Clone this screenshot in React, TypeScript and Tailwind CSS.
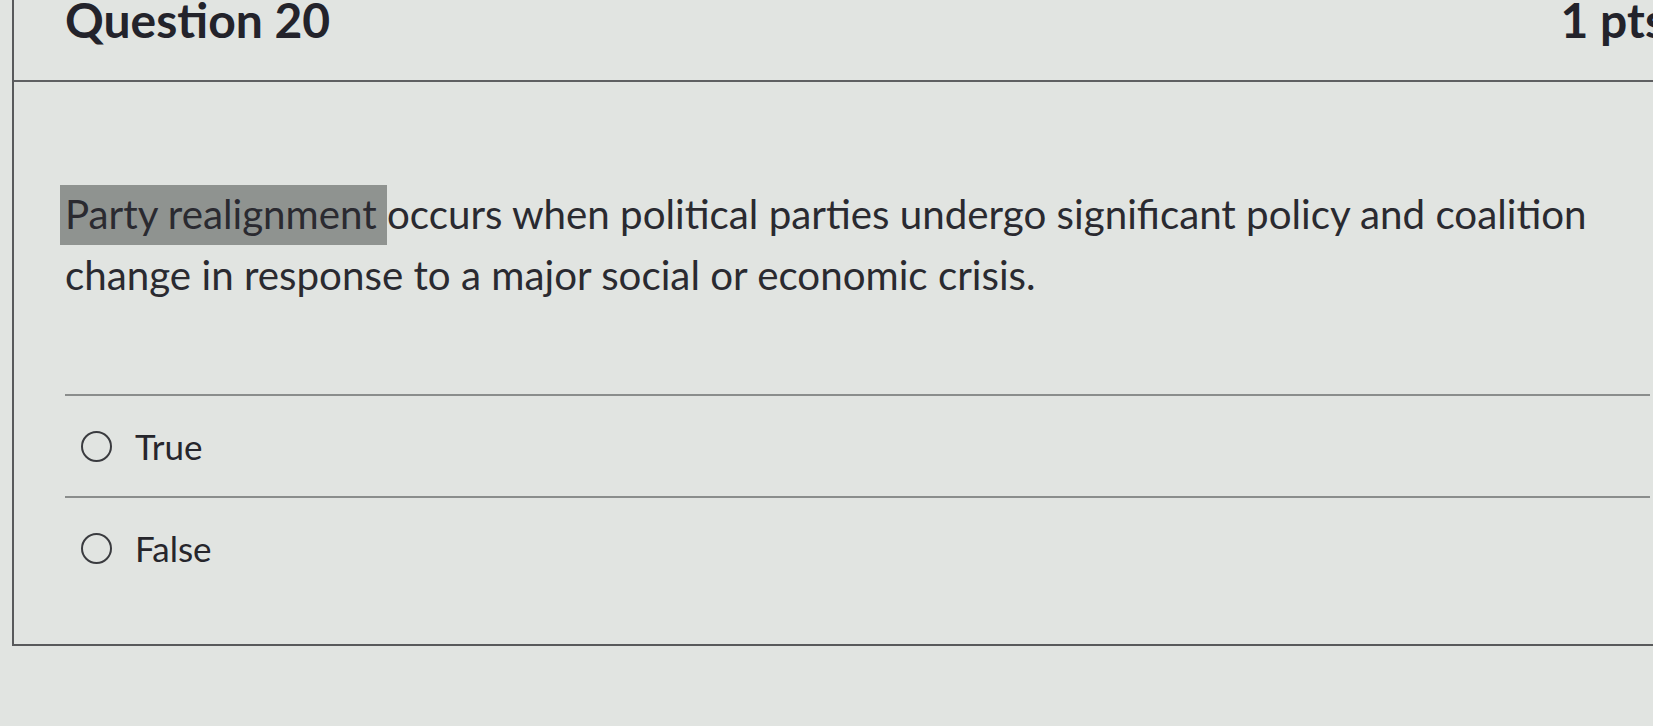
import React from "react";

const options = ["True", "False"];

const Radio: React.FC<{ label: string }> = ({ label }) => (
  <div className="flex h-[100px] items-center">
    <span className="ml-[16px] h-[31px] w-[31px] shrink-0 rounded-full border-[2.5px] border-[#3a3b3f]" />
    <span className="ml-[23px] text-[35px] text-[#26262c]">{label}</span>
  </div>
);

export default function App() {
  return (
    <div
      className="h-[726px] w-full overflow-hidden bg-[#e1e4e1] text-[#26262c]"
      style={{ fontFamily: "Lato, 'Open Sans', sans-serif" }}
    >
      <div className="ml-[12px] flex h-[646px] flex-col border-b-[2px] border-l-[2px] border-[#58595b]">
        {/* header */}
        <div className="flex h-[82px] shrink-0 items-start justify-between border-b-[2px] border-[#5f6062]">
          <h1 className="ml-[51px] mt-[-10px] text-[48px] font-bold leading-[60px] text-[#23232b]">
            Question 20
          </h1>
          <span className="mr-[-13px] mt-[-10px] text-[48px] font-bold leading-[60px] text-[#23232b]">
            1 pts
          </span>
        </div>

        {/* body */}
        <div className="flex flex-1 flex-col pl-[51px] pr-[3px]">
          <p className="mt-[101px] text-[40.3px] leading-[61px] text-[#2a2a30]">
            <span className="-ml-[5px] bg-[#8f9390] pb-[7px] pl-[5px] pt-[4px]">
              Party realignment{" "}
            </span>
            occurs when political parties undergo significant policy and coalition change in
            response to a major social or economic crisis.
          </p>

          <div className="mt-[89px] border-t-[2px] border-[#8a8d8c]">
            {options.map((o, i) => (
              <div key={o} className={i > 0 ? "border-t-[2px] border-[#8a8d8c]" : ""}>
                <Radio label={o} />
              </div>
            ))}
          </div>
        </div>
      </div>
    </div>
  );
}
